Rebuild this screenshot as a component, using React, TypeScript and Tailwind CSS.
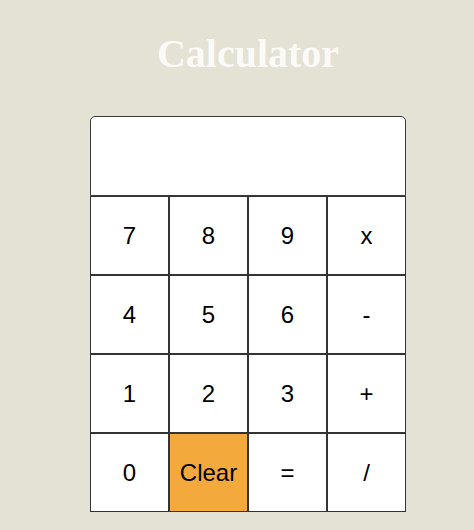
import React, { useState } from 'react';

const keys = ['7', '8', '9', 'x', '4', '5', '6', '-', '1', '2', '3', '+', '0', 'Clear', '=', '/'];

export default function App() {
  const [value, setValue] = useState('');

  const press = (k: string) => {
    if (k === 'Clear') return setValue('');
    if (k === '=') {
      try {
        // eslint-disable-next-line no-new-func
        setValue(String(Function(`return (${value.replace(/x/g, '*')})`)()));
      } catch {
        setValue('Error');
      }
      return;
    }
    setValue(value + k);
  };

  return (
    <div className="min-h-[530px] w-full bg-[#e4e1d5]">
      <div className="ml-[90px] w-[316px] pt-[30px]">
        <h1 className="text-center text-[40px] font-bold leading-[48px] text-[#fbfaf6] font-['Liberation_Serif',serif]">
          Calculator
        </h1>
        <div className="mt-[38px] flex h-[80px] items-center justify-end rounded-t-[5px] border border-[#3a3a3a] bg-white px-3 text-[28px] font-['Liberation_Sans',sans-serif]">
          {value}
        </div>
        <div className="grid grid-cols-4">
          {keys.map((k) => (
            <button
              key={k}
              onClick={() => press(k)}
              className={`h-[79px] border border-[#333] text-[24px] text-black font-['Liberation_Sans',sans-serif] ${
                k === 'Clear' ? 'bg-[#f4a93c]' : 'bg-white'
              }`}
            >
              {k}
            </button>
          ))}
        </div>
      </div>
    </div>
  );
}
